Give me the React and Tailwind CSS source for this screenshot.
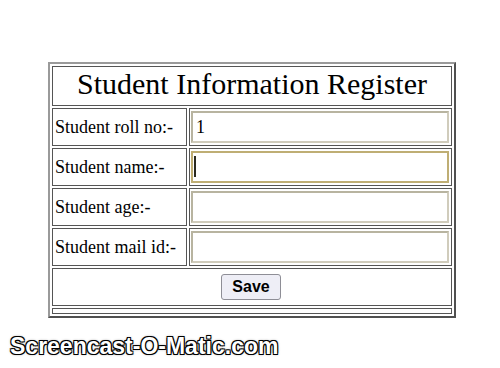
import React from "react";

const rows = [
  { label: "Student roll no:-", value: "1" },
  { label: "Student name:-", value: "", focused: true },
  { label: "Student age:-", value: "" },
  { label: "Student mail id:-", value: "" },
];

const App = () => {
  return (
    <div className="w-[500px] h-[368px] bg-white pt-[62px] pl-[48px] font-['Liberation_Serif',serif] text-black">
      {/* Register table */}
      <div className="w-[408px] border-2 border-t-[#9a9a9a] border-l-[#9a9a9a] border-r-[#505050] border-b-[#505050] p-[2px] flex flex-col gap-[2px]">
        <div className="h-[40px] border border-[#555] flex items-center justify-center text-[30px] leading-[34px] pb-[4px]">
          Student Information Register
        </div>

        {rows.map((row) => (
          <div key={row.label} className="h-[38px] flex gap-[2px]">
            <div className="w-[135px] border border-[#555] flex items-center px-[2px] text-[18px] leading-[22px]">
              {row.label}
            </div>
            <div className="flex-1 border border-[#555] flex items-center pl-[1px] pr-[2px]">
              <div className="relative w-full">
                <input
                  type="text"
                  defaultValue={row.value}
                  readOnly
                  className={
                    row.focused
                      ? "w-full h-[32px] border-2 border-[#bfae74] bg-white px-[3px] text-[18px] font-['Liberation_Serif',serif] outline-none"
                      : "w-full h-[32px] border-2 border-t-[#b8b4a0] border-l-[#b8b4a0] border-b-[#d0ccbc] border-r-[#d0ccbc] bg-white px-[3px] text-[18px] font-['Liberation_Serif',serif] outline-none"
                  }
                />
                {row.focused && (
                  <span className="absolute left-[3px] top-[5px] w-[2px] h-[21px] bg-[#2a2a20]" />
                )}
              </div>
            </div>
          </div>
        ))}

        <div className="h-[38px] border border-[#555] flex items-center justify-center">
          <button className="w-[60px] h-[26px] border border-[#8e8e96] rounded-[3px] bg-[#eeeef6] text-[16px] font-bold font-['Liberation_Sans',sans-serif] leading-none ml-[-2px]">
            Save
          </button>
        </div>

        <div className="h-[6px] border border-[#555]" />
      </div>

      {/* Recorder watermark */}
      <div className="mt-[17px] ml-[-38px] text-[23px] leading-none font-bold font-['Liberation_Sans',sans-serif] text-white [text-shadow:-1px_-1px_0_#000,1px_-1px_0_#000,-1px_1px_0_#000,1px_1px_0_#000,0_0_3px_#555]">
        Screencast-O-Matic.com
      </div>
    </div>
  );
};

export default App;
